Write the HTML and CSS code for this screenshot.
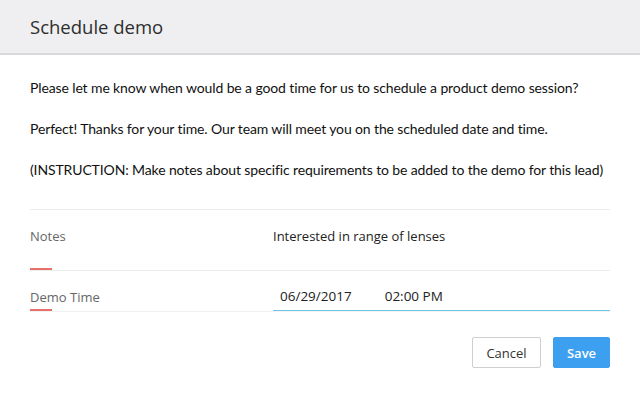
FILE: index.html
```html
<!DOCTYPE html>
<html lang="en">
<head>
    <meta charset="UTF-8">
    <title>Schedule demo</title>
    <link rel="stylesheet" href="styles.css">
</head>
<body>
    <div class="dialog">
        <div class="dialog-header">
            <h2>Schedule demo</h2>
        </div>

        <div class="dialog-body">
            <div class="script">
                <p>Please let me know when would be a good time for us to schedule a product demo session?</p>
                <p>Perfect! Thanks for your time. Our team will meet you on the scheduled date and time.</p>
                <p>(INSTRUCTION: Make notes about specific requirements to be added to the demo for this lead)</p>
            </div>

            <div class="fields">
                <div class="field">
                    <div class="field-label">Notes</div>
                    <div class="field-value">Interested in range of lenses</div>
                </div>
                <div class="field field-time">
                    <div class="field-label">Demo Time</div>
                    <div class="field-value active">
                        <span class="date">06/29/2017</span>
                        <span class="time">02:00 PM</span>
                    </div>
                </div>
            </div>

            <div class="actions">
                <button class="btn btn-cancel">Cancel</button>
                <button class="btn btn-save">Save</button>
            </div>
        </div>
    </div>
</body>
</html>
```

FILE: styles.css
```css
* { margin: 0; padding: 0; box-sizing: border-box; }
body {
    font-family: 'Open Sans', 'Liberation Sans', sans-serif;
    background: white;
    color: #333;
}
.dialog {
    width: 640px;
    height: 398px;
    background: white;
}
.dialog-header {
    height: 55px;
    background: #efeff1;
    border-bottom: 2px solid #d9d9db;
    padding: 0 30px;
    display: flex;
    align-items: center;
}
.dialog-header h2 {
    font-size: 18.5px;
    font-weight: normal;
    color: #2e2e2e;
    margin-top: -1px;
}
.dialog-body {
    padding: 0 30px;
}
.script {
    font-family: Lato, 'Liberation Sans', sans-serif;
    font-size: 14px;
    color: #111;
    padding-top: 23px;
    padding-bottom: 29px;
    border-bottom: 1px solid #ececec;
}
.script p {
    line-height: 20px;
    margin-bottom: 21px;
    letter-spacing: -0.12px;
}
.script p:last-child { margin-bottom: 0; }
.field {
    display: flex;
    height: 61px;
    border-bottom: 1px solid #ececec;
    position: relative;
}
.field-time {
    height: 41px;
    border-bottom-color: #f2f2f2;
}
.field-label {
    width: 243px;
    font-size: 13px;
    color: #666;
    padding-top: 17px;
}
.field::after {
    content: "";
    position: absolute;
    left: 0;
    bottom: 0;
    width: 22px;
    height: 2px;
    background: #e8706a;
}
.field-value {
    flex: 1;
    font-size: 13px;
    color: #222;
    padding-top: 17px;
}
.field-value.active {
    border-bottom: 1px solid #6cc6e4;
    padding-left: 7px;
    padding-top: 16px;
    font-size: 13.5px;
    display: flex;
    gap: 33px;
}
.actions {
    display: flex;
    justify-content: flex-end;
    gap: 12px;
    padding-top: 25px;
}
.btn {
    height: 31px;
    font-family: 'Open Sans', 'Liberation Sans', sans-serif;
    font-size: 13px;
    border-radius: 2px;
    cursor: pointer;
}
.btn-cancel {
    width: 69px;
    background: white;
    border: 1px solid #cfcfcf;
    color: #333;
}
.btn-save {
    width: 57px;
    background: #3d9ff0;
    border: 1px solid #3d9ff0;
    color: white;
    font-weight: 600;
}
```
